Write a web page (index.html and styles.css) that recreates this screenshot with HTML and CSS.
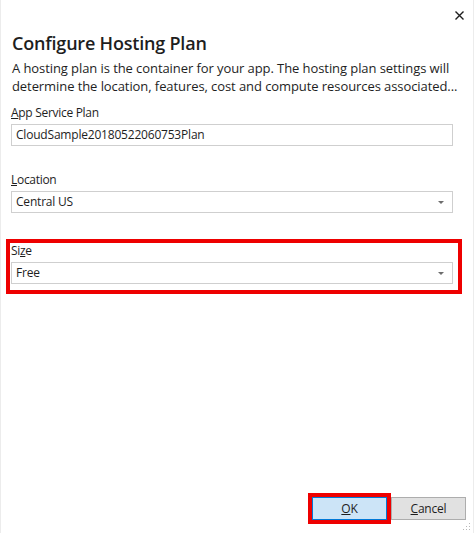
FILE: index.html
```html
<!DOCTYPE html>
<html>
<head>
<meta charset="utf-8">
<link rel="stylesheet" href="styles.css">
</head>
<body>
<div class="dialog">
  <div class="titlebar">
    <button class="close" aria-label="Close">
      <svg width="9" height="9" viewBox="0 0 9 9"><path d="M0.5 0.5L8.5 8.5M8.5 0.5L0.5 8.5" stroke="#1e1e1e" stroke-width="1.4" fill="none"/></svg>
    </button>
  </div>
  <div class="content">
    <h1 class="title">Configure Hosting Plan</h1>
    <p class="desc">A hosting plan is the container for your app. The hosting plan settings will<br>determine the location, features, cost and compute resources associated...</p>
    <div class="field field-first">
      <label class="label"><u>A</u>pp Service Plan</label>
      <div class="input">CloudSample20180522060753Plan</div>
    </div>
    <div class="field">
      <label class="label"><u>L</u>ocation</label>
      <div class="input select"><span>Central US</span><span class="arrow"></span></div>
    </div>
    <div class="field highlight">
      <label class="label">Si<u>z</u>e</label>
      <div class="input select"><span>Free</span><span class="arrow"></span></div>
    </div>
  </div>
  <div class="footer">
    <button class="btn btn-ok"><u>O</u>K</button>
    <button class="btn"><u>C</u>ancel</button>
  </div>
  <svg class="grip" width="8" height="8" viewBox="0 0 8 8">
    <rect x="6" y="0" width="1" height="1" fill="#b8b8b8"/>
    <rect x="3" y="3" width="1" height="1" fill="#b8b8b8"/>
    <rect x="6" y="3" width="1" height="1" fill="#b8b8b8"/>
    <rect x="0" y="6" width="1" height="1" fill="#b8b8b8"/>
    <rect x="3" y="6" width="1" height="1" fill="#b8b8b8"/>
    <rect x="6" y="6" width="1" height="1" fill="#b8b8b8"/>
  </svg>
</div>
</body>
</html>
```

FILE: styles.css
```css
html, body {
  margin: 0;
  padding: 0;
  background: #ffffff;
}

body {
  font-family: "Open Sans", "Noto Sans", "Liberation Sans", sans-serif;
  color: #1e1e1e;
  font-size: 12px;
}

.dialog {
  position: relative;
  width: 474px;
  height: 533px;
  box-sizing: border-box;
  border-left: 1px solid #ececec;
  border-right: 1px solid #ececec;
  display: flex;
  flex-direction: column;
  background: #ffffff;
}

.titlebar {
  height: 31px;
  display: flex;
  justify-content: flex-end;
  align-items: flex-start;
}

.close {
  border: 0;
  background: transparent;
  padding: 0;
  margin: 10px 9px 0 0;
  width: 10px;
  height: 10px;
  display: flex;
  align-items: center;
  justify-content: center;
}

.content {
  padding: 0 20px 0 10px;
  display: flex;
  flex-direction: column;
}

.title {
  margin: 0 0 0 1px;
  font-size: 18px;
  font-weight: 600;
  line-height: 24px;
  letter-spacing: -0.2px;
  color: #1e1e1e;
}

.desc {
  margin: 4px 0 0 1px;
  font-size: 13px;
  line-height: 18px;
  letter-spacing: -0.08px;
  white-space: nowrap;
}

.field {
  display: flex;
  flex-direction: column;
  margin-top: 26px;
}

.field-first {
  margin-top: 10px;
}

.label {
  line-height: 15px;
  margin-bottom: 4px;
  letter-spacing: -0.3px;
}

.input {
  height: 22px;
  box-sizing: border-box;
  border: 1px solid #cfcfcf;
  background: #ffffff;
  padding: 0 8px 0 4px;
  display: flex;
  align-items: center;
  line-height: 20px;
  letter-spacing: -0.2px;
}

.select {
  justify-content: space-between;
}

.arrow {
  width: 0;
  height: 0;
  border-left: 3px solid transparent;
  border-right: 3px solid transparent;
  border-top: 3px solid #6d6d6d;
  margin-top: 1px;
}

.highlight {
  margin: 26px -9px 0 -5px;
  border: 4px solid #ee0000;
  padding: 0 5px 6px 1px;
}

.footer {
  margin-top: auto;
  display: flex;
  justify-content: flex-end;
  gap: 4px;
  padding: 0 7px 13px 0;
}

.btn {
  width: 75px;
  height: 23px;
  box-sizing: border-box;
  border: 1px solid #adadad;
  background: #e1e1e1;
  font-family: inherit;
  font-size: 12px;
  color: #1e1e1e;
  padding: 0;
  letter-spacing: -0.2px;
}

.btn-ok {
  background: #cce4f7;
  border-color: #0078d7;
  outline: 4px solid #ee0000;
  outline-offset: 0;
}

.grip {
  position: absolute;
  right: 2px;
  bottom: 2px;
}
```
